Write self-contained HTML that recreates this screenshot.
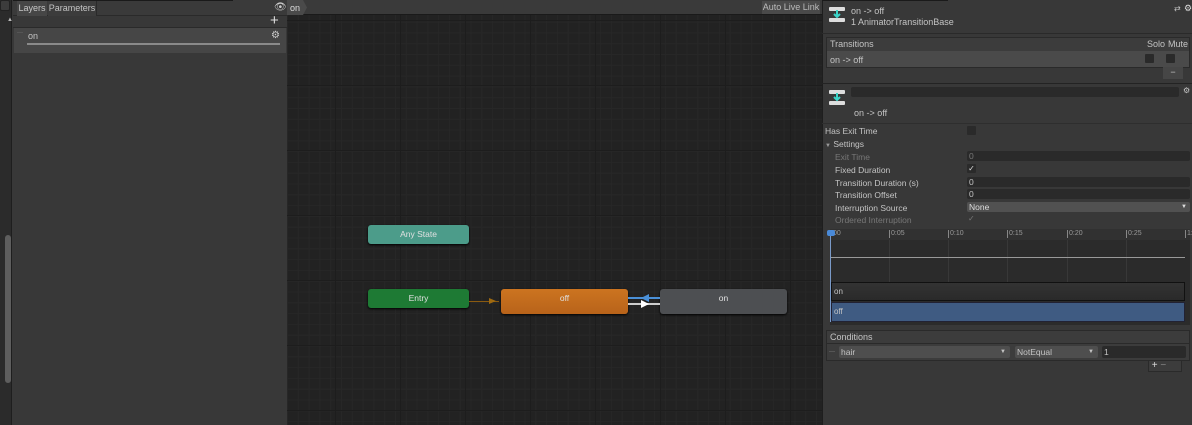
<!DOCTYPE html><html><head><style>
*{margin:0;padding:0;box-sizing:border-box}
body{width:1192px;height:425px;overflow:hidden;background:#383838;font-family:"Liberation Sans",sans-serif;font-size:9px;color:#c4c4c4;position:relative}
.a{position:absolute}
.cb{position:absolute;width:9px;height:9px;background:#2a2a2a;border-radius:1px}
.lbl{position:absolute;left:835px;font-size:8.5px}
.fld{position:absolute;left:967px;width:223px;height:10px;background:#2a2a2a;border-radius:2px;padding-left:2px;font-size:8.5px;line-height:10px}
.node{position:absolute;border-radius:3px;text-align:center;color:#e0e0e0;font-size:8.5px;box-shadow:0 1px 2px #000}
.rl{position:absolute;top:230px;font-size:7px;color:#999;border-left:1px solid #888;padding-left:1px;line-height:8px}
.vl{position:absolute;top:240px;width:1px;height:42px;background:#383838}
</style></head><body>
<div class="a" style="left:0;top:0;width:12px;height:425px;background:#2b2b2b;border-right:1px solid #1e1e1e"></div>
<div class="a" style="left:0;top:0;width:10px;height:11px;background:#3c3c3c;border:1px solid #222;border-radius:2px"></div>
<div class="a" style="left:7px;top:17px;font-size:6px;color:#bbb">▲</div>
<div class="a" style="left:5px;top:235px;width:6px;height:148px;background:#5e5e5e;border-radius:3px"></div>
<div class="a" style="left:13px;top:0;width:274px;height:425px;background:#383838"></div>
<div class="a" style="left:13px;top:0;width:274px;height:16px;background:#3a3a3a;border-bottom:1px solid #2a2a2a"></div>
<div class="a" style="left:13px;top:0;width:220px;height:1px;background:#1a1a1a"></div>
<div class="a" style="left:17px;top:1px;width:30px;height:15px;background:#464646;color:#c8c8c8;line-height:14px;text-align:center">Layers</div>
<div class="a" style="left:48px;top:1px;width:49px;height:15px;background:#3c3c3c;line-height:14px;text-align:center;border-right:1px solid #2a2a2a">Parameters</div>
<div class="a" style="left:274px;top:2px;font-size:10px;color:#ccc">👁</div>
<div class="a" style="left:270px;top:12px;font-size:15px;color:#ddd">+</div>
<div class="a" style="left:13px;top:27px;width:274px;height:1px;background:#2a2a2a"></div>
<div class="a" style="left:14px;top:28px;width:272px;height:25px;background:#464646"></div>
<div class="a" style="left:17px;top:32px;width:6px;height:1px;background:#555"></div>
<div class="a" style="left:28px;top:31px;font-size:9px">on</div>
<div class="a" style="left:271px;top:30px;font-size:10px;color:#ccc">⚙</div>
<div class="a" style="left:27px;top:43px;width:253px;height:2px;background:#8a8a8a"></div>
<div class="a" style="left:287px;top:0;width:535px;height:425px;background-color:#222;background-image:linear-gradient(90deg,#1d1d1d 1px,transparent 1px),linear-gradient(#1d1d1d 1px,transparent 1px),linear-gradient(90deg,#272727 1px,transparent 1px),linear-gradient(#272727 1px,transparent 1px);background-size:65px 65px,65px 65px,10.8px 10.8px,10.8px 10.8px;background-position:48px 20px,48px 20px,0 0,0 0"></div>
<div class="a" style="left:287px;top:0;width:535px;height:15px;background:#3a3a3a;border-bottom:1px solid #1a1a1a"></div>
<div class="a" style="left:287px;top:0;width:20px;height:15px;background:#4a4a4a;clip-path:polygon(0 0,80% 0,100% 50%,80% 100%,0 100%)"></div>
<div class="a" style="left:290px;top:3px;color:#ddd">on</div>
<div class="a" style="left:762px;top:1px;width:58px;height:13px;background:#4a4a4a;line-height:13px;text-align:center;color:#bbb">Auto Live Link</div>
<div class="node" style="left:368px;top:225px;width:101px;height:19px;background:#4c9c8a;line-height:19px">Any State</div>
<div class="node" style="left:368px;top:289px;width:101px;height:19px;background:#1e7a34;line-height:19px">Entry</div>
<div class="node" style="left:501px;top:289px;width:127px;height:25px;background:linear-gradient(#cc7420,#b8631a);line-height:18px">off</div>
<div class="node" style="left:660px;top:289px;width:127px;height:25px;background:#4d4f52;line-height:18px">on</div>
<div class="a" style="left:469px;top:301px;width:30px;height:1px;background:#8a5a10"></div>
<div class="a" style="left:489px;top:298px;width:0;height:0;border-left:7px solid #a06a10;border-top:3px solid transparent;border-bottom:3px solid transparent"></div>
<div class="a" style="left:628px;top:297px;width:32px;height:2px;background:#4a90d8"></div>
<div class="a" style="left:641px;top:294px;width:0;height:0;border-right:8px solid #4a90d8;border-top:4px solid transparent;border-bottom:4px solid transparent"></div>
<div class="a" style="left:628px;top:303px;width:32px;height:2px;background:#ccc"></div>
<div class="a" style="left:641px;top:300px;width:0;height:0;border-left:8px solid #fff;border-top:4px solid transparent;border-bottom:4px solid transparent"></div>
<div class="a" style="left:822px;top:0;width:370px;height:425px;background:#383838;border-left:1px solid #1e1e1e"></div>
<div class="a" style="left:822px;top:0;width:126px;height:1px;background:#1a1a1a"></div>
<svg class="a" style="left:829px;top:7px" width="16" height="16"><rect x="0" y="0" width="16" height="4" rx="1" fill="#ddd"/><rect x="0" y="11" width="16" height="4" rx="1" fill="#ddd"/><path d="M8 3v7M5 7l3 3 3-3" stroke="#3cd4c8" stroke-width="2" fill="none"/></svg>
<div class="a" style="left:851px;top:6px">on -&gt; off</div>
<div class="a" style="left:851px;top:17px">1 AnimatorTransitionBase</div>
<div class="a" style="left:1174px;top:4px;font-size:8px">⇄</div>
<div class="a" style="left:1184px;top:3px;font-size:9px;color:#ddd">⚙</div>
<div class="a" style="left:822px;top:33px;width:370px;height:1px;background:#2a2a2a"></div>
<div class="a" style="left:826px;top:37px;width:364px;height:31px;background:#3c3c3c;border:1px solid #2a2a2a"></div>
<div class="a" style="left:830px;top:39px">Transitions</div>
<div class="a" style="left:1147px;top:39px">Solo</div><div class="a" style="left:1168px;top:39px">Mute</div>
<div class="a" style="left:827px;top:51px;width:362px;height:16px;background:#4a4a4a"></div>
<div class="a" style="left:830px;top:55px">on -&gt; off</div>
<div class="cb" style="left:1145px;top:54px"></div><div class="cb" style="left:1166px;top:54px"></div>
<div class="a" style="left:1163px;top:67px;width:20px;height:12px;background:#464646;text-align:center;line-height:11px">−</div>
<div class="a" style="left:822px;top:83px;width:370px;height:1px;background:#232323"></div>
<svg class="a" style="left:829px;top:90px" width="16" height="16"><rect x="0" y="0" width="16" height="4" rx="1" fill="#ddd"/><rect x="0" y="11" width="16" height="4" rx="1" fill="#ddd"/><path d="M8 3v7M5 7l3 3 3-3" stroke="#3cd4c8" stroke-width="2" fill="none"/></svg>
<div class="a" style="left:851px;top:87px;width:328px;height:10px;background:#2a2a2a;border-radius:2px"></div>
<div class="a" style="left:1183px;top:86px;font-size:8px">⚙</div>
<div class="a" style="left:854px;top:108px">on -&gt; off</div>
<div class="a" style="left:822px;top:123px;width:370px;height:1px;background:#2e2e2e"></div>
<div class="a" style="left:825px;top:126px;font-size:8.5px">Has Exit Time</div><div class="cb" style="left:967px;top:126px"></div>
<div class="a" style="left:825px;top:139px;font-size:8.5px"><span style="font-size:6px;color:#999">▼</span> Settings</div>
<div class="lbl" style="top:152px;color:#777">Exit Time</div><div class="fld" style="top:151px;color:#777">0</div>
<div class="lbl" style="top:165px">Fixed Duration</div><div class="cb" style="left:967px;top:164px;font-size:8px;line-height:9px;text-align:center;color:#ddd">✓</div>
<div class="lbl" style="top:178px">Transition Duration (s)</div><div class="fld" style="top:177px">0</div>
<div class="lbl" style="top:190px">Transition Offset</div><div class="fld" style="top:189px">0</div>
<div class="lbl" style="top:203px">Interruption Source</div><div class="fld" style="top:202px;background:#515151;color:#ddd">None<span style="position:absolute;right:3px;font-size:6px">▼</span></div>
<div class="lbl" style="top:215px;color:#777">Ordered Interruption</div><div class="a" style="left:968px;top:214px;font-size:8px;color:#777">✓</div>
<div class="a" style="left:830px;top:229px;width:360px;height:96px;background:#2b2b2b"></div>
<div class="a" style="left:830px;top:229px;width:360px;height:11px;background:#313131"></div>
<div class="rl" style="left:830px;border:0">:00</div>
<div class="rl" style="left:889px">0:05</div>
<div class="rl" style="left:948px">0:10</div>
<div class="rl" style="left:1007px">0:15</div>
<div class="rl" style="left:1067px">0:20</div>
<div class="rl" style="left:1126px">0:25</div>
<div class="rl" style="left:1185px">1:</div>
<div class="vl" style="left:889px"></div><div class="vl" style="left:948px"></div><div class="vl" style="left:1007px"></div><div class="vl" style="left:1067px"></div><div class="vl" style="left:1126px"></div>
<div class="a" style="left:831px;top:257px;width:354px;height:1px;background:#999"></div>
<div class="a" style="left:830px;top:230px;width:1px;height:92px;background:#7a9ac8"></div>
<div class="a" style="left:827px;top:230px;width:8px;height:6px;background:#4a8ad8;border-radius:2px"></div>
<div class="a" style="left:831px;top:282px;width:354px;height:19px;background:linear-gradient(#333,#2a2a2a);border:1px solid #111;padding-left:2px;line-height:18px;font-size:8px">on</div>
<div class="a" style="left:831px;top:302px;width:354px;height:20px;background:#3f5b82;border:1px solid #223;padding-left:2px;line-height:18px;font-size:8px">off</div>
<div class="a" style="left:826px;top:330px;width:364px;height:31px;background:#3c3c3c;border:1px solid #2a2a2a"></div>
<div class="a" style="left:830px;top:332px">Conditions</div>
<div class="a" style="left:827px;top:343px;width:362px;height:1px;background:#2a2a2a"></div>
<div class="a" style="left:829px;top:351px;width:6px;height:1px;background:#555"></div>
<div class="a" style="left:839px;top:346px;width:171px;height:12px;background:#4e4e4e;border-radius:2px;padding-left:2px;line-height:12px;font-size:8.5px">hair<span style="position:absolute;right:4px;font-size:6px">▼</span></div>
<div class="a" style="left:1015px;top:346px;width:83px;height:12px;background:#4e4e4e;border-radius:2px;padding-left:2px;line-height:12px;font-size:8.5px">NotEqual<span style="position:absolute;right:4px;font-size:6px">▼</span></div>
<div class="a" style="left:1102px;top:346px;width:84px;height:12px;background:#2a2a2a;border-radius:2px;padding-left:2px;line-height:12px;font-size:8.5px">1</div>
<div class="a" style="left:1148px;top:360px;width:34px;height:12px;background:#3c3c3c;border:1px solid #2a2a2a;font-size:10px;line-height:10px;color:#ddd">&nbsp;+ <span style="color:#888">−</span></div>
</body></html>
